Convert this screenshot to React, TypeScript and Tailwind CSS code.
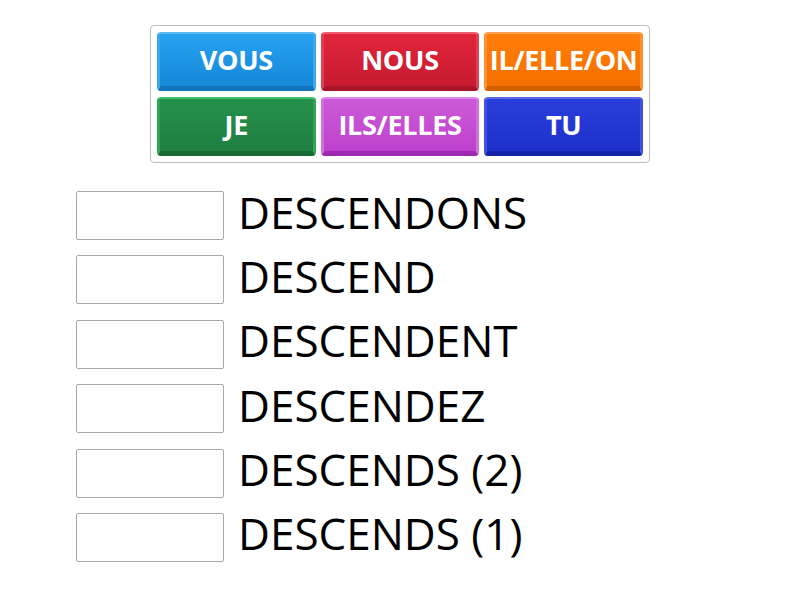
const tiles = [
  { label: "VOUS", cls: "from-[#26a2f0] to-[#1588d8] border-t-[#5bb8f0] border-x-[#3aa8ee] border-b-[#1274bc]" },
  { label: "NOUS", cls: "from-[#e0253c] to-[#c81a30] border-t-[#ea5c6e] border-x-[#e2404f] border-b-[#a81428]" },
  { label: "IL/ELLE/ON", cls: "from-[#ff7e0a] to-[#f57000] border-t-[#ffa050] border-x-[#ff9030] border-b-[#d06000]" },
  { label: "JE", cls: "from-[#24904b] to-[#1f7f42] border-t-[#3cc46a] border-x-[#2ea558] border-b-[#186a36]" },
  { label: "ILS/ELLES", cls: "from-[#cc5ad8] to-[#be42cc] border-t-[#dc88e4] border-x-[#d270de] border-b-[#9c28b4]" },
  { label: "TU", cls: "from-[#2a3edc] to-[#1e30cc] border-t-[#5a68e4] border-x-[#4050e0] border-b-[#1624a8]" },
];

const rows = ["DESCENDONS", "DESCEND", "DESCENDENT", "DESCENDEZ", "DESCENDS (2)", "DESCENDS (1)"];

export default function App() {
  return (
    <div className="w-[800px] h-[600px] bg-white font-['Open_Sans',sans-serif]">
      <div className="pt-[25px] flex justify-center">
        <div className="w-[500px] h-[138px] border border-[#bdbdbd] rounded-[4px] p-[6px] grid grid-cols-3 gap-x-[5px] gap-y-[6px]">
          {tiles.map((t) => (
            <div
              key={t.label}
              className={`${t.cls} bg-gradient-to-b border-[3px] border-t-[2px] border-b-[5px] rounded-[4px] flex items-center justify-center text-white font-bold text-[27px] tracking-[-0.3px] whitespace-nowrap`}
            >
              {t.label}
            </div>
          ))}
        </div>
      </div>
      <div className="pl-[76px] pt-[28px] flex flex-col gap-[15.4px]">
        {rows.map((r) => (
          <div key={r} className="flex items-center h-[49px]">
            <div className="w-[148px] h-[49px] border border-[#a8a8a8] rounded-[2px] bg-white shrink-0" />
            <span className="ml-[14px] text-[44px] leading-none text-black -translate-y-[4px]">{r}</span>
          </div>
        ))}
      </div>
    </div>
  );
}
